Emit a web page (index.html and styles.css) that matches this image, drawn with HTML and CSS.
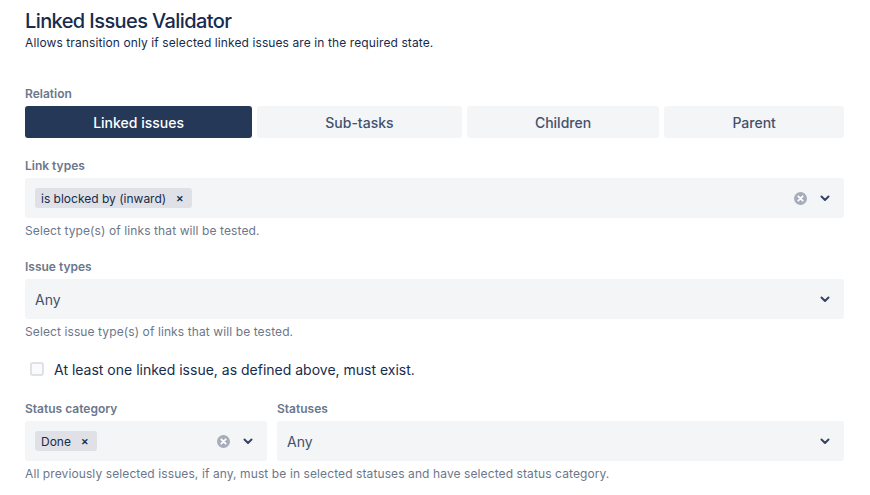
FILE: index.html
```html
<!DOCTYPE html>
<html>
<head>
<meta charset="utf-8">
<link rel="stylesheet" href="styles.css">
</head>
<body>
<div class="page">
  <h1 class="title">Linked Issues Validator</h1>
  <p class="subtitle">Allows transition only if selected linked issues are in the required state.</p>

  <div class="field first">
    <div class="label">Relation</div>
    <div class="segments">
      <button class="seg active">Linked issues</button>
      <button class="seg">Sub-tasks</button>
      <button class="seg">Children</button>
      <button class="seg">Parent</button>
    </div>
  </div>

  <div class="field">
    <div class="label">Link types</div>
    <div class="select">
      <div class="value">
        <span class="tag">is blocked by (inward)<span class="tag-x">&#x2715;</span></span>
      </div>
      <div class="indicators">
        <svg class="clear" width="13" height="13" viewBox="0 0 13 13"><circle cx="6.5" cy="6.5" r="6.5" fill="#A5ADBA"/><path d="M4.3 4.3 L8.7 8.7 M8.7 4.3 L4.3 8.7" stroke="#fff" stroke-width="1.8" stroke-linecap="round"/></svg>
        <svg class="chev" width="10" height="7" viewBox="0 0 10 7"><path d="M1.5 1.5 L5 5 L8.5 1.5" fill="none" stroke="#344563" stroke-width="2" stroke-linecap="round" stroke-linejoin="round"/></svg>
      </div>
    </div>
    <div class="help">Select type(s) of links that will be tested.</div>
  </div>

  <div class="field">
    <div class="label">Issue types</div>
    <div class="select">
      <div class="value"><span class="placeholder">Any</span></div>
      <div class="indicators">
        <svg class="chev" width="10" height="7" viewBox="0 0 10 7"><path d="M1.5 1.5 L5 5 L8.5 1.5" fill="none" stroke="#344563" stroke-width="2" stroke-linecap="round" stroke-linejoin="round"/></svg>
      </div>
    </div>
    <div class="help">Select issue type(s) of links that will be tested.</div>
  </div>

  <label class="check">
    <span class="box"></span>
    <span class="check-text">At least one linked issue, as defined above, must exist.</span>
  </label>

  <div class="field status">
    <div class="row">
      <div class="col col-cat">
        <div class="label">Status category</div>
        <div class="select">
          <div class="value"><span class="tag">Done<span class="tag-x">&#x2715;</span></span></div>
          <div class="indicators">
            <svg class="clear" width="13" height="13" viewBox="0 0 13 13"><circle cx="6.5" cy="6.5" r="6.5" fill="#A5ADBA"/><path d="M4.3 4.3 L8.7 8.7 M8.7 4.3 L4.3 8.7" stroke="#fff" stroke-width="1.8" stroke-linecap="round"/></svg>
            <svg class="chev" width="10" height="7" viewBox="0 0 10 7"><path d="M1.5 1.5 L5 5 L8.5 1.5" fill="none" stroke="#344563" stroke-width="2" stroke-linecap="round" stroke-linejoin="round"/></svg>
          </div>
        </div>
      </div>
      <div class="col col-st">
        <div class="label">Statuses</div>
        <div class="select">
          <div class="value"><span class="placeholder">Any</span></div>
          <div class="indicators">
            <svg class="chev" width="10" height="7" viewBox="0 0 10 7"><path d="M1.5 1.5 L5 5 L8.5 1.5" fill="none" stroke="#344563" stroke-width="2" stroke-linecap="round" stroke-linejoin="round"/></svg>
          </div>
        </div>
      </div>
    </div>
    <div class="help">All previously selected issues, if any, must be in selected statuses and have selected status category.</div>
  </div>
</div>
</body>
</html>
```

FILE: styles.css
```css
* { box-sizing: border-box; }
html, body { margin: 0; padding: 0; background: #fff; }
body {
  font-family: Inter, Roboto, "Liberation Sans", sans-serif;
  color: #172B4D;
}
.page {
  width: 870px;
  padding: 9px 26px 0 25px;
}
.title {
  margin: 0;
  font-size: 20px;
  line-height: 24px;
  font-weight: 500;
  color: #172B4D;
  letter-spacing: -0.6px;
}
.subtitle {
  margin: 2px 0 0;
  font-size: 12px;
  line-height: 16px;
  color: #172B4D;
  letter-spacing: 0.1px;
}
.field { margin-top: 20px; }
.field.first { margin-top: 35px; }
.label {
  font-size: 12px;
  line-height: 16px;
  font-weight: 600;
  color: #6B778C;
  margin-bottom: 4px;
}
.segments {
  display: flex;
  gap: 5px;
}
.seg {
  flex: 1 1 auto;
  height: 32px;
  border: none;
  border-radius: 3px;
  background: #F4F5F7;
  color: #42526E;
  font-family: inherit;
  font-size: 14px;
  font-weight: 500;
  padding: 0 10px;
}
.seg.active {
  background: #253858;
  color: #fff;
}
.select {
  height: 40px;
  background: #F4F5F7;
  border-radius: 3px;
  display: flex;
  align-items: center;
  padding: 0 14px 0 10px;
}
.value {
  flex: 1;
  display: flex;
  align-items: center;
}
.tag {
  display: inline-flex;
  align-items: center;
  height: 20px;
  background: #DFE1E6;
  border-radius: 3px;
  padding: 0 8px 0 6px;
  font-size: 12px;
  color: #172B4D;
}
.tag-x {
  margin-left: 10px;
  font-size: 9px;
  font-weight: 700;
}
.placeholder {
  font-size: 14px;
  color: #42526E;
}
.indicators {
  display: flex;
  align-items: center;
  gap: 13px;
}
.help {
  margin-top: 5px;
  font-size: 12px;
  line-height: 16px;
  color: #6B778C;
  letter-spacing: 0.1px;
}
.check {
  display: flex;
  align-items: center;
  margin-top: 19px;
  height: 20px;
  padding-left: 5px;
}
.box {
  width: 14px;
  height: 14px;
  border: 2px solid #DFE1E6;
  border-radius: 3px;
  background: #FAFBFC;
}
.check-text {
  margin-left: 10px;
  font-size: 14px;
  color: #172B4D;
}
.field.status { margin-top: 22px; }
.row {
  display: flex;
  gap: 10px;
}
.col-cat { width: 242px; }
.col-st { flex: 1; }
```
